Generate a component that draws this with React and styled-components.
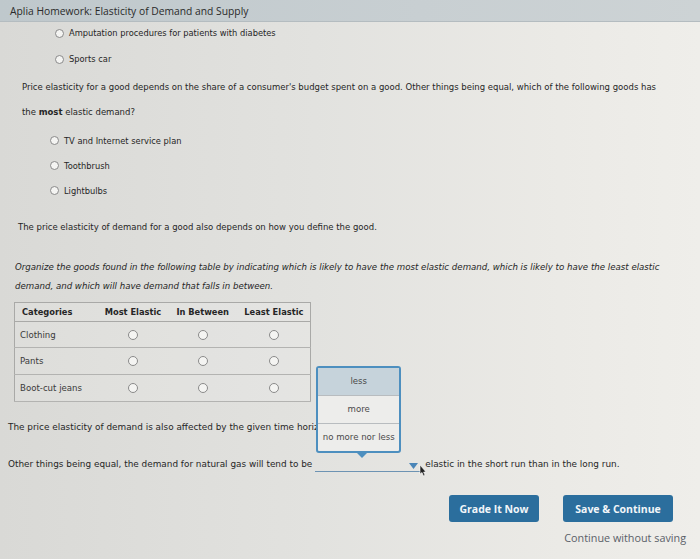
import React from 'react';
import styled, { createGlobalStyle } from 'styled-components';

const GlobalStyle = createGlobalStyle`
	html, body {
		margin: 0;
		padding: 0;
	}
	body {
		width: 700px;
		height: 559px;
		overflow: hidden;
		background: linear-gradient(90deg, #d9d9d6 0%, #e2e2df 45%, #ebeae6 80%, #efeeea 100%);
		font-family: 'DejaVu Sans', Verdana, sans-serif;
		color: #262626;
	}
`;

const Page = styled.div`
	width: 700px;
	height: 559px;
	display: flex;
	flex-direction: column;
`;

const Header = styled.div`
	height: 22px;
	flex: none;
	display: flex;
	align-items: center;
	padding-left: 10px;
	background: linear-gradient(90deg, #bfc8cc, #c8cfd2 60%, #cdd3d5);
	border-bottom: 1px solid #b4bcc0;
	box-sizing: border-box;
	font-family: 'Open Sans', sans-serif;
	font-size: 10.3px;
	color: #2a2a2a;
`;

const OptionList = styled.div`
	display: flex;
	flex-direction: column;
	gap: ${(p) => p.$gap}px;
	margin-top: ${(p) => p.$top}px;
	padding-left: ${(p) => p.$indent}px;
`;

const Option = styled.label`
	height: ${(p) => p.$h}px;
	display: flex;
	align-items: center;
	gap: 5px;
	font-size: 8.3px;
`;

const Radio = styled.span`
	width: ${(p) => p.$size || 9}px;
	height: ${(p) => p.$size || 9}px;
	border-radius: 50%;
	border: 1px solid #8a8a8a;
	background: #f4f4f2;
	box-sizing: border-box;
	display: inline-block;
	flex: none;
`;

const Para = styled.p`
	margin: ${(p) => p.$top}px 0 0 ${(p) => p.$left}px;
	line-height: ${(p) => p.$lh}px;
	font-size: ${(p) => p.$size || 8.5}px;
	font-style: ${(p) => (p.$italic ? 'italic' : 'normal')};
	white-space: nowrap;
`;

const Table = styled.table`
	margin: 6px 0 0 14px;
	width: 297px;
	border-collapse: collapse;
	border: 1px solid #a9a9a7;
	font-size: 8.6px;
	background: rgba(255, 255, 255, 0.12);
`;

const Th = styled.th`
	height: 18px;
	padding: 0;
	font-size: 8.3px;
	font-weight: bold;
	text-align: ${(p) => (p.$left ? 'left' : 'center')};
	padding-left: ${(p) => (p.$left ? 7 : 0)}px;
	width: ${(p) => p.$w}px;
	border-bottom: 1px solid #a9a9a7;
`;

const Td = styled.td`
	height: ${(p) => p.$h}px;
	padding: 0;
	padding-left: ${(p) => (p.$left ? 5 : 0)}px;
	text-align: ${(p) => (p.$left ? 'left' : 'center')};
	border-bottom: 1px solid #b3b3b1;
	color: #3a3a3a;
	vertical-align: middle;
	line-height: 0;
	& > span {
		vertical-align: middle;
	}
`;

const CellText = styled.span`
	line-height: normal;
`;

const Line = styled.div`
	margin: ${(p) => p.$top}px 0 0 8px;
	height: 20px;
	display: flex;
	align-items: center;
	font-size: 8.9px;
	white-space: nowrap;
`;

const SelectWrap = styled.span`
	position: relative;
	display: inline-flex;
	align-items: flex-end;
	flex: none;
	width: 105px;
	height: 14px;
	margin: 0 5px 0 3px;
	border-bottom: 1.5px solid #6d93b3;
`;

const Caret = styled.svg`
	position: absolute;
	right: 2px;
	bottom: 2px;
`;

const Pointer = styled.svg`
	position: absolute;
	right: -7px;
	bottom: -6px;
`;

const Popup = styled.div`
	position: absolute;
	left: 1px;
	bottom: 18px;
	width: 85px;
	border: 2px solid #4d8fbf;
	border-radius: 3px;
	background: #ededeb;
	box-sizing: border-box;
	display: flex;
	flex-direction: column;
	z-index: 2;
	&::after {
		content: '';
		position: absolute;
		left: 38px;
		bottom: -7px;
		border-left: 6px solid transparent;
		border-right: 6px solid transparent;
		border-top: 6px solid #4d8fbf;
	}
`;

const PopItem = styled.div`
	height: 27px;
	display: flex;
	align-items: center;
	justify-content: center;
	font-size: 8.6px;
	color: #4a4a4a;
	background: ${(p) => (p.$active ? '#c6d3db' : 'transparent')};
	border-top: ${(p) => (p.$first ? 'none' : '1px solid #b8bcbf')};
`;

const ButtonRow = styled.div`
	margin-top: 21px;
	padding-right: 27px;
	display: flex;
	justify-content: flex-end;
	gap: 24px;
`;

const Button = styled.button`
	width: ${(p) => p.$w}px;
	height: 27px;
	border: none;
	border-radius: 3px;
	background: #2b6e9d;
	color: #f2f6f9;
	font-family: 'Open Sans', sans-serif;
	font-weight: bold;
	font-size: 10.5px;
	padding: 0;
`;

const Skip = styled.div`
	margin-top: 8px;
	padding-right: 14px;
	text-align: right;
	font-family: 'Open Sans', sans-serif;
	font-size: 10.8px;
	color: #5a6068;
`;

const rows = [
	{ name: 'Clothing', h: 25 },
	{ name: 'Pants', h: 26 },
	{ name: 'Boot-cut jeans', h: 26 },
];

const App = () => {
	return (
		<Page>
			<GlobalStyle />
			<Header>Aplia Homework: Elasticity of Demand and Supply</Header>

			<OptionList $top={0} $gap={4} $indent={55}>
				<Option $h={22}>
					<Radio />
					Amputation procedures for patients with diabetes
				</Option>
				<Option $h={22}>
					<Radio />
					Sports car
				</Option>
			</OptionList>

			<Para $top={5} $left={22} $lh={25}>
				Price elasticity for a good depends on the share of a consumer's budget spent on a good. Other things
				being equal, which of the following goods has
				<br />
				the <b>most</b> elastic demand?
			</Para>

			<OptionList $top={3} $gap={0} $indent={50}>
				<Option $h={25}>
					<Radio />
					TV and Internet service plan
				</Option>
				<Option $h={25}>
					<Radio />
					Toothbrush
				</Option>
				<Option $h={25}>
					<Radio />
					Lightbulbs
				</Option>
			</OptionList>

			<Para $top={14} $left={18} $lh={20}>
				The price elasticity of demand for a good also depends on how you define the good.
			</Para>

			<Para $top={21} $left={15} $lh={19} $size={8.65} $italic>
				Organize the goods found in the following table by indicating which is likely to have the most elastic
				demand, which is likely to have the least elastic
				<br />
				demand, and which will have demand that falls in between.
			</Para>

			<Table>
				<thead>
					<tr>
						<Th $left $w={78}>Categories</Th>
						<Th $w={72}>Most Elastic</Th>
						<Th $w={72}>In Between</Th>
						<Th $w={75}>Least Elastic</Th>
					</tr>
				</thead>
				<tbody>
					{rows.map((row) => (
						<tr key={row.name}>
							<Td $left $h={row.h}>
								<CellText>{row.name}</CellText>
							</Td>
							<Td $h={row.h}><Radio $size={10} /></Td>
							<Td $h={row.h}><Radio $size={10} /></Td>
							<Td $h={row.h}><Radio $size={10} /></Td>
						</tr>
					))}
				</tbody>
			</Table>

			<Line $top={15}>The price elasticity of demand is also affected by the given time horizon.</Line>

			<Line $top={17}>
				Other things being equal, the demand for natural gas will tend to be
				<SelectWrap>
					<Popup>
						<PopItem $first $active>less</PopItem>
						<PopItem>more</PopItem>
						<PopItem>no more nor less</PopItem>
					</Popup>
					<Caret width="9" height="6" viewBox="0 0 9 6">
						<path d="M0 0 L9 0 L4.5 6 Z" fill="#4a86b8" />
					</Caret>
					<Pointer width="8" height="12" viewBox="0 0 8 12">
						<path d="M1 0 L1 9 L3 7.5 L4.5 11 L6 10.3 L4.6 7 L7 7 Z" fill="#222" stroke="#fff" strokeWidth="0.6" />
					</Pointer>
				</SelectWrap>
				elastic in the short run than in the long run.
			</Line>

			<ButtonRow>
				<Button $w={90}>Grade It Now</Button>
				<Button $w={110}>Save &amp; Continue</Button>
			</ButtonRow>
			<Skip>Continue without saving</Skip>
		</Page>
	);
};

export default App;
